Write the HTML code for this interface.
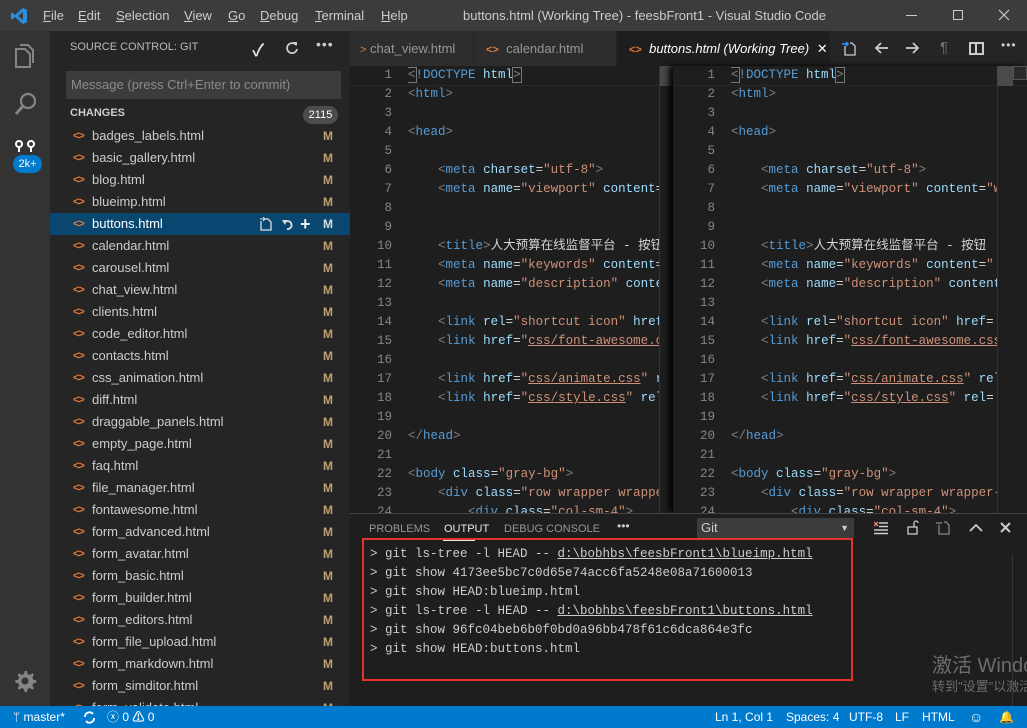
<!DOCTYPE html>
<html><head><meta charset="utf-8"><style>
*{box-sizing:border-box;margin:0;padding:0}
body{width:1027px;height:728px;overflow:hidden;background:#1e1e1e;font-family:"Liberation Sans","Noto Sans CJK SC",sans-serif;font-size:13px;color:#ccc;position:relative}
.abs{position:absolute}
#title{left:0;top:0;width:1027px;height:31px;background:#3c3c3c}
.menu{position:absolute;top:8px;font-size:13px;color:#ccc}
#act{left:0;top:31px;width:50px;height:675px;background:#333}
#side{left:50px;top:31px;width:300px;height:675px;background:#252526;overflow:hidden}
.row{position:absolute;left:0;width:300px;height:22px;line-height:22px;font-size:13px;color:#ccc}
.row .ic{position:absolute;left:23px;color:#e37933;font-size:11px;font-weight:bold;letter-spacing:-1px}
.row .nm{position:absolute;left:42px}
.row .m{position:absolute;left:273px;color:#c0a070;font-weight:bold;font-size:12px}
#tabs{left:350px;top:31px;width:677px;height:35px;background:#252526}
.tab{position:absolute;top:0;height:35px;line-height:35px;font-size:13px;color:#969696;background:#2d2d2d}
.code{position:absolute;font-family:"Liberation Mono","Noto Sans CJK SC",monospace;font-size:12.5px;line-height:19px;white-space:pre;color:#d4d4d4}
.ln{position:absolute;font-family:"Liberation Mono",monospace;font-size:12.5px;line-height:19px;color:#858585;text-align:right;width:30px}
.t{color:#808080}.n{color:#569cd6}.a{color:#9cdcfe}.s{color:#ce9178}.u{text-decoration:underline}
#panel{left:350px;top:513px;width:677px;height:193px;background:#1e1e1e;border-top:1px solid #444}
.ptab{position:absolute;top:9px;font-size:11px;color:#969696}
.out{position:absolute;font-family:"Liberation Mono",monospace;font-size:12.5px;color:#ccc;line-height:19px;white-space:pre}
#status{left:0;top:706px;width:1027px;height:22px;background:#007acc;color:#fff;font-size:12px;line-height:22px}
</style></head><body>

<div id="title" class="abs">
<svg class="abs" style="left:10px;top:7px" width="18" height="18" viewBox="0 0 18 18"><path d="M13 1 L17 3 V15 L13 17 L5 10 L2 12.5 L1 12 V6 L2 5.5 L5 8 Z M13 5 L8 9 L13 13 Z" fill="#2c8fde"/></svg>
<span class="menu" style="left:43px"><u>F</u>ile</span>
<span class="menu" style="left:78px"><u>E</u>dit</span>
<span class="menu" style="left:116px"><u>S</u>election</span>
<span class="menu" style="left:184px"><u>V</u>iew</span>
<span class="menu" style="left:228px"><u>G</u>o</span>
<span class="menu" style="left:260px"><u>D</u>ebug</span>
<span class="menu" style="left:315px"><u>T</u>erminal</span>
<span class="menu" style="left:381px"><u>H</u>elp</span>
<span class="menu" style="left:463px">buttons.html (Working Tree) - feesbFront1 - Visual Studio Code</span>
<div class="abs" style="left:906px;top:15px;width:11px;height:1px;background:#ccc"></div>
<div class="abs" style="left:953px;top:10px;width:10px;height:10px;border:1px solid #ccc"></div>
<svg class="abs" style="left:998px;top:9px" width="12" height="12"><path d="M1 1L11 11M11 1L1 11" stroke="#ccc" stroke-width="1.2"/></svg>
</div>

<div id="act" class="abs">
<svg class="abs" style="left:13px;top:11px" width="24" height="26" viewBox="0 0 24 26"><path d="M7 3 H15 L20 8 V21" fill="none" stroke="#858585" stroke-width="2"/><path d="M3 7 H12 L17 12 V25 H3 Z" fill="none" stroke="#858585" stroke-width="2"/></svg>
<svg class="abs" style="left:13px;top:60px" width="26" height="26"><circle cx="15" cy="10" r="7" fill="none" stroke="#858585" stroke-width="2.2"/><path d="M10 15 L3 23" stroke="#858585" stroke-width="3"/></svg>
<svg class="abs" style="left:14px;top:108px" width="22" height="14"><circle cx="5" cy="5" r="3" fill="none" stroke="#fff" stroke-width="2"/><circle cx="17" cy="5" r="3" fill="none" stroke="#fff" stroke-width="2"/><path d="M5 8 V13 M17 8 V13" stroke="#fff" stroke-width="2"/></svg>
<div class="abs" style="left:13px;top:124px;width:29px;height:18px;border-radius:9px;background:#007acc;color:#fff;font-size:11px;line-height:18px;text-align:center">2k+</div>
<svg class="abs" style="left:13px;top:638px" width="24" height="24" viewBox="0 0 24 24"><path d="M12 2 l2 0 l.6 3 l2.2 1 l2.6-1.7 l1.6 1.6 l-1.7 2.6 l1 2.2 l3 .6 v2.4 l-3 .6 l-1 2.2 l1.7 2.6 l-1.6 1.6 l-2.6-1.7 l-2.2 1 l-.6 3 h-2.4 l-.6-3 l-2.2-1 l-2.6 1.7 l-1.6-1.6 l1.7-2.6 l-1-2.2 l-3-.6 v-2.4 l3-.6 l1-2.2 l-1.7-2.6 l1.6-1.6 l2.6 1.7 l2.2-1 l.6-3 Z" fill="#858585"/><circle cx="12" cy="12" r="3.5" fill="#333"/></svg>
</div>

<div id="side" class="abs">
<div class="abs" style="left:20px;top:10px;font-size:11px;color:#bbb">SOURCE CONTROL: GIT</div>
<div class="abs" style="left:202px;top:5px;font-size:17px;color:#ddd;font-weight:bold">✓</div>
<svg class="abs" style="left:235px;top:10px" width="14" height="14"><path d="M11 4 A5 5 0 1 0 12 8" fill="none" stroke="#ccc" stroke-width="1.8"/><path d="M8 1 L12 1 L12 5 Z" fill="#ccc"/></svg>
<div class="abs" style="left:266px;top:5px;font-size:14px;color:#ccc;letter-spacing:1px">•••</div>
<div class="abs" style="left:16px;top:40px;width:275px;height:28px;background:#3c3c3c;color:#8b8b8b;font-size:13px;line-height:28px;padding-left:5px">Message (press Ctrl+Enter to commit)</div>
<div class="abs" style="left:20px;top:76px;font-size:11px;font-weight:bold;color:#ccc">CHANGES</div>
<div class="abs" style="left:253px;top:75px;width:35px;height:18px;border-radius:9px;background:#4d4d4d;color:#fff;font-size:11px;line-height:18px;text-align:center">2115</div>
<div class="row" style="top:94px"><span class="ic">&lt;&gt;</span><span class="nm">badges_labels.html</span><span class="m">M</span></div>
<div class="row" style="top:116px"><span class="ic">&lt;&gt;</span><span class="nm">basic_gallery.html</span><span class="m">M</span></div>
<div class="row" style="top:138px"><span class="ic">&lt;&gt;</span><span class="nm">blog.html</span><span class="m">M</span></div>
<div class="row" style="top:160px"><span class="ic">&lt;&gt;</span><span class="nm">blueimp.html</span><span class="m">M</span></div>
<div class="row" style="top:182px;background:#094771;color:#fff"><span class="ic">&lt;&gt;</span><span class="nm">buttons.html</span>
<svg class="abs" style="left:209px;top:4px" width="14" height="14"><path d="M2 4 V13 H12 V5 L9 2 H6" fill="none" stroke="#ddd" stroke-width="1.3"/><path d="M1 2 H6 M4 0 L6 2 L4 4" stroke="#ddd" fill="none"/></svg>
<svg class="abs" style="left:231px;top:4px" width="14" height="14"><path d="M4 5 A4 4 0 1 1 6 12" fill="none" stroke="#ddd" stroke-width="1.8"/><path d="M1 3 L6 3 L4 8 Z" fill="#ddd"/></svg>
<span class="abs" style="left:250px;top:0;font-size:18px;font-weight:bold;color:#eee">+</span><span class="m" style="color:#ddd">M</span></div>
<div class="row" style="top:204px"><span class="ic">&lt;&gt;</span><span class="nm">calendar.html</span><span class="m">M</span></div>
<div class="row" style="top:226px"><span class="ic">&lt;&gt;</span><span class="nm">carousel.html</span><span class="m">M</span></div>
<div class="row" style="top:248px"><span class="ic">&lt;&gt;</span><span class="nm">chat_view.html</span><span class="m">M</span></div>
<div class="row" style="top:270px"><span class="ic">&lt;&gt;</span><span class="nm">clients.html</span><span class="m">M</span></div>
<div class="row" style="top:292px"><span class="ic">&lt;&gt;</span><span class="nm">code_editor.html</span><span class="m">M</span></div>
<div class="row" style="top:314px"><span class="ic">&lt;&gt;</span><span class="nm">contacts.html</span><span class="m">M</span></div>
<div class="row" style="top:336px"><span class="ic">&lt;&gt;</span><span class="nm">css_animation.html</span><span class="m">M</span></div>
<div class="row" style="top:358px"><span class="ic">&lt;&gt;</span><span class="nm">diff.html</span><span class="m">M</span></div>
<div class="row" style="top:380px"><span class="ic">&lt;&gt;</span><span class="nm">draggable_panels.html</span><span class="m">M</span></div>
<div class="row" style="top:402px"><span class="ic">&lt;&gt;</span><span class="nm">empty_page.html</span><span class="m">M</span></div>
<div class="row" style="top:424px"><span class="ic">&lt;&gt;</span><span class="nm">faq.html</span><span class="m">M</span></div>
<div class="row" style="top:446px"><span class="ic">&lt;&gt;</span><span class="nm">file_manager.html</span><span class="m">M</span></div>
<div class="row" style="top:468px"><span class="ic">&lt;&gt;</span><span class="nm">fontawesome.html</span><span class="m">M</span></div>
<div class="row" style="top:490px"><span class="ic">&lt;&gt;</span><span class="nm">form_advanced.html</span><span class="m">M</span></div>
<div class="row" style="top:512px"><span class="ic">&lt;&gt;</span><span class="nm">form_avatar.html</span><span class="m">M</span></div>
<div class="row" style="top:534px"><span class="ic">&lt;&gt;</span><span class="nm">form_basic.html</span><span class="m">M</span></div>
<div class="row" style="top:556px"><span class="ic">&lt;&gt;</span><span class="nm">form_builder.html</span><span class="m">M</span></div>
<div class="row" style="top:578px"><span class="ic">&lt;&gt;</span><span class="nm">form_editors.html</span><span class="m">M</span></div>
<div class="row" style="top:600px"><span class="ic">&lt;&gt;</span><span class="nm">form_file_upload.html</span><span class="m">M</span></div>
<div class="row" style="top:622px"><span class="ic">&lt;&gt;</span><span class="nm">form_markdown.html</span><span class="m">M</span></div>
<div class="row" style="top:644px"><span class="ic">&lt;&gt;</span><span class="nm">form_simditor.html</span><span class="m">M</span></div>
<div class="row" style="top:666px"><span class="ic">&lt;&gt;</span><span class="nm">form_validate.html</span><span class="m">M</span></div>
</div>

<div id="tabs" class="abs">
<div class="tab" style="left:0;width:123px;padding-left:10px"><span style="color:#e37933;font-size:11px">&gt;</span> chat_view.html</div>
<div class="tab" style="left:124px;width:142px;padding-left:12px"><span style="color:#e37933;font-size:11px;font-weight:bold">&lt;&gt;</span>&nbsp; calendar.html</div>
<div class="tab" style="left:267px;width:213px;padding-left:12px;background:#1e1e1e;color:#fff;font-style:italic"><span style="color:#e37933;font-size:11px;font-weight:bold;font-style:normal">&lt;&gt;</span>&nbsp; buttons.html (Working Tree) <span style="font-style:normal;margin-left:4px">✕</span></div>
<svg class="abs" style="left:492px;top:10px" width="14" height="15"><path d="M3 5 V14 H13 V5 L10 2 H8" fill="none" stroke="#ccc" stroke-width="1.3"/><path d="M0 3 H6 M4 1 L6 3 L4 5" stroke="#3794ff" stroke-width="1.5" fill="none"/></svg>
<svg class="abs" style="left:525px;top:11px" width="14" height="12"><path d="M13 6 H2 M6 1 L1 6 L6 11" stroke="#ccc" stroke-width="1.8" fill="none"/></svg>
<svg class="abs" style="left:555px;top:11px" width="14" height="12"><path d="M1 6 H12 M8 1 L13 6 L8 11" stroke="#ccc" stroke-width="1.8" fill="none"/></svg>
<div class="abs" style="left:590px;top:8px;color:#6e6e6e;font-size:15px">¶</div>
<div class="abs" style="left:619px;top:11px;width:15px;height:13px;border:2px solid #ccc"><div style="position:absolute;left:4px;top:0;width:2px;height:9px;background:#ccc"></div></div>
<div class="abs" style="left:651px;top:7px;color:#ccc;font-size:12px;letter-spacing:1px">•••</div>
</div>

<!-- left editor -->
<div class="abs" style="left:350px;top:66px;width:323px;height:447px;overflow:hidden;background:#1e1e1e">
<div class="abs" style="left:0;top:-1px;width:323px;height:21px;border-top:1px solid #282828;border-bottom:1px solid #282828;background:#1e1e1e"></div>
<div class="ln" style="left:12px;top:0">1<br>2<br>3<br>4<br>5<br>6<br>7<br>8<br>9<br>10<br>11<br>12<br>13<br>14<br>15<br>16<br>17<br>18<br>19<br>20<br>21<br>22<br>23<br>24</div>
<div class="code" style="left:58px;top:0;width:251px;overflow:hidden"><span class="t" style="outline:1px solid #777">&lt;</span><span class="n">!DOCTYPE</span> <span class="a">html</span><span class="t" style="outline:1px solid #777">&gt;</span>
<span class="t">&lt;</span><span class="n">html</span><span class="t">&gt;</span>

<span class="t">&lt;</span><span class="n">head</span><span class="t">&gt;</span>

    <span class="t">&lt;</span><span class="n">meta</span> <span class="a">charset</span>=<span class="s">"utf-8"</span><span class="t">&gt;</span>
    <span class="t">&lt;</span><span class="n">meta</span> <span class="a">name</span>=<span class="s">"viewport"</span> <span class="a">content</span>=<span class="s">"width=device-width</span>


    <span class="t">&lt;</span><span class="n">title</span><span class="t">&gt;</span>人大预算在线监督平台 - 按钮
    <span class="t">&lt;</span><span class="n">meta</span> <span class="a">name</span>=<span class="s">"keywords"</span> <span class="a">content</span>=<span class="s">"</span>
    <span class="t">&lt;</span><span class="n">meta</span> <span class="a">name</span>=<span class="s">"description"</span> <span class="a">content</span>=
 
    <span class="t">&lt;</span><span class="n">link</span> <span class="a">rel</span>=<span class="s">"shortcut icon"</span> <span class="a">href</span>=
    <span class="t">&lt;</span><span class="n">link</span> <span class="a">href</span>=<span class="s">"<span class="u">css/font-awesome.css</span>"</span>

    <span class="t">&lt;</span><span class="n">link</span> <span class="a">href</span>=<span class="s">"<span class="u">css/animate.css</span>"</span> <span class="a">rel</span>=
    <span class="t">&lt;</span><span class="n">link</span> <span class="a">href</span>=<span class="s">"<span class="u">css/style.css</span>"</span> <span class="a">rel</span>=

<span class="t">&lt;/</span><span class="n">head</span><span class="t">&gt;</span>

<span class="t">&lt;</span><span class="n">body</span> <span class="a">class</span>=<span class="s">"gray-bg"</span><span class="t">&gt;</span>
    <span class="t">&lt;</span><span class="n">div</span> <span class="a">class</span>=<span class="s">"row wrapper wrapper-content"</span>
        <span class="t">&lt;</span><span class="n">div</span> <span class="a">class</span>=<span class="s">"col-sm-4"</span><span class="t">&gt;</span></div>
<div class="abs" style="left:309px;top:0;width:14px;height:447px;background:#1e1e1e;border-left:1px solid #333"></div>
<div class="abs" style="left:310px;top:0;width:13px;height:20px;background:#4a4a4a"></div>
</div>

<!-- right editor -->
<div class="abs" style="left:673px;top:66px;width:354px;height:447px;overflow:hidden;background:#1e1e1e;box-shadow:-4px 0 6px #000">
<div class="abs" style="left:0;top:-1px;width:354px;height:21px;border-top:1px solid #282828;border-bottom:1px solid #282828"></div>
<div class="ln" style="left:12px;top:0">1<br>2<br>3<br>4<br>5<br>6<br>7<br>8<br>9<br>10<br>11<br>12<br>13<br>14<br>15<br>16<br>17<br>18<br>19<br>20<br>21<br>22<br>23<br>24</div>
<div class="code" style="left:58px;top:0;width:266px;overflow:hidden"><span class="t" style="outline:1px solid #777">&lt;</span><span class="n">!DOCTYPE</span> <span class="a">html</span><span class="t" style="outline:1px solid #777">&gt;</span>
<span class="t">&lt;</span><span class="n">html</span><span class="t">&gt;</span>

<span class="t">&lt;</span><span class="n">head</span><span class="t">&gt;</span>

    <span class="t">&lt;</span><span class="n">meta</span> <span class="a">charset</span>=<span class="s">"utf-8"</span><span class="t">&gt;</span>
    <span class="t">&lt;</span><span class="n">meta</span> <span class="a">name</span>=<span class="s">"viewport"</span> <span class="a">content</span>=<span class="s">"width=device-width</span>


    <span class="t">&lt;</span><span class="n">title</span><span class="t">&gt;</span>人大预算在线监督平台 - 按钮
    <span class="t">&lt;</span><span class="n">meta</span> <span class="a">name</span>=<span class="s">"keywords"</span> <span class="a">content</span>=<span class="s">"</span>
    <span class="t">&lt;</span><span class="n">meta</span> <span class="a">name</span>=<span class="s">"description"</span> <span class="a">content</span>=

    <span class="t">&lt;</span><span class="n">link</span> <span class="a">rel</span>=<span class="s">"shortcut icon"</span> <span class="a">href</span>=
    <span class="t">&lt;</span><span class="n">link</span> <span class="a">href</span>=<span class="s">"<span class="u">css/font-awesome.css</span>"</span>

    <span class="t">&lt;</span><span class="n">link</span> <span class="a">href</span>=<span class="s">"<span class="u">css/animate.css</span>"</span> <span class="a">rel</span>=
    <span class="t">&lt;</span><span class="n">link</span> <span class="a">href</span>=<span class="s">"<span class="u">css/style.css</span>"</span> <span class="a">rel</span>=

<span class="t">&lt;/</span><span class="n">head</span><span class="t">&gt;</span>

<span class="t">&lt;</span><span class="n">body</span> <span class="a">class</span>=<span class="s">"gray-bg"</span><span class="t">&gt;</span>
    <span class="t">&lt;</span><span class="n">div</span> <span class="a">class</span>=<span class="s">"row wrapper wrapper-content"</span>
        <span class="t">&lt;</span><span class="n">div</span> <span class="a">class</span>=<span class="s">"col-sm-4"</span><span class="t">&gt;</span></div>
<div class="abs" style="left:324px;top:0;width:16px;height:447px;border-left:1px solid #333"></div>
<div class="abs" style="left:324px;top:0;width:16px;height:20px;background:#4a4a4a"></div>
<div class="abs" style="left:340px;top:0;width:14px;height:14px;border:1px solid #555;background:#2a2a2a"></div>
</div>

<div id="panel" class="abs">
<span class="ptab" style="left:19px">PROBLEMS</span>
<span class="ptab" style="left:94px;color:#e7e7e7">OUTPUT</span>
<div class="abs" style="left:93px;top:26px;width:32px;height:1px;background:#e7e7e7"></div>
<span class="ptab" style="left:154px">DEBUG CONSOLE</span>
<span class="ptab" style="left:267px;top:5px;font-size:12px;color:#ccc">•••</span>
<div class="abs" style="left:347px;top:4px;width:157px;height:20px;background:#3c3c3c;color:#ccc;font-size:13px;line-height:20px;padding-left:4px">Git<span style="position:absolute;right:5px;font-size:9px">▼</span></div>
<svg class="abs" style="left:524px;top:7px" width="14" height="14"><path d="M5 2h9M5 5.5h9M0 9h14M0 12.5h14" stroke="#ccc" stroke-width="1.5"/><path d="M0 1l4 4M4 1l-4 4" stroke="#f48771" stroke-width="1.3"/></svg>
<svg class="abs" style="left:557px;top:6px" width="12" height="15"><rect x="1" y="7" width="9" height="7" fill="none" stroke="#ccc" stroke-width="1.3"/><path d="M7 7V3a2 2 0 0 1 4 0" fill="none" stroke="#ccc" stroke-width="1.3"/></svg>
<svg class="abs" style="left:586px;top:6px" width="14" height="15"><path d="M3 5V14H13V5L10 2H8" fill="none" stroke="#888" stroke-width="1.3"/><path d="M0 3H6" stroke="#888" stroke-width="1.3"/></svg>
<svg class="abs" style="left:619px;top:9px" width="14" height="10"><path d="M1 8L7 2L13 8" fill="none" stroke="#ccc" stroke-width="1.8"/></svg>
<svg class="abs" style="left:650px;top:8px" width="11" height="11"><path d="M1 1L10 10M10 1L1 10" stroke="#ccc" stroke-width="2"/></svg>
<div class="abs" style="left:12px;top:24px;width:491px;height:143px;border:2px solid #e5322d"></div>
<div class="out" style="left:20px;top:31px">&gt; git ls-tree -l HEAD -- <u>d:\bobhbs\feesbFront1\blueimp.html</u>
&gt; git show 4173ee5bc7c0d65e74acc6fa5248e08a71600013
&gt; git show HEAD:blueimp.html
&gt; git ls-tree -l HEAD -- <u>d:\bobhbs\feesbFront1\buttons.html</u>
&gt; git show 96fc04beb6b0f0bd0a96bb478f61c6dca864e3fc
&gt; git show HEAD:buttons.html</div>
<div class="abs" style="left:582px;top:135px;font-size:20px;color:#6c6c6c;white-space:nowrap">激活 Windows</div>
<div class="abs" style="left:582px;top:162px;font-size:13px;color:#6c6c6c;white-space:nowrap">转到"设置"以激活</div>
<div class="abs" style="left:662px;top:40px;width:15px;height:153px;border-left:1px solid #333"></div>
</div>

<div id="status" class="abs">
<span class="abs" style="left:13px">ᛘ master*</span>
<svg class="abs" style="left:83px;top:5px" width="13" height="13"><path d="M2 6A4.5 4.5 0 0 1 10 3M11 7A4.5 4.5 0 0 1 3 10" fill="none" stroke="#fff" stroke-width="1.8"/></svg>
<span class="abs" style="left:107px">ⓧ 0 <b>⚠</b> 0</span>
<span class="abs" style="left:715px">Ln 1, Col 1</span>
<span class="abs" style="left:786px">Spaces: 4</span>
<span class="abs" style="left:849px">UTF-8</span>
<span class="abs" style="left:895px">LF</span>
<span class="abs" style="left:922px">HTML</span>
<span class="abs" style="left:969px;font-size:14px">☺</span>
<span class="abs" style="left:999px;font-size:12px">🔔</span>
</div>
</body></html>
